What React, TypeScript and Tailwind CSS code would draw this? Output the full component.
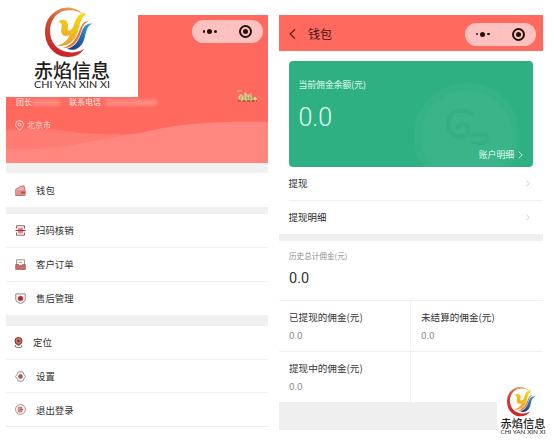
import type { ReactNode } from "react";

type LogoProps = { className?: string };

function Logo({ className }: LogoProps) {
  return (
    <svg viewBox="0 0 80 86" className={className}>
      <defs>
        <linearGradient id="ring" x1="0.7" y1="0" x2="0.4" y2="1">
          <stop offset="0" stopColor="#e8a45a" />
          <stop offset="0.35" stopColor="#d4502f" />
          <stop offset="1" stopColor="#cb1f2a" />
        </linearGradient>
        <linearGradient id="gold" x1="0.6" y1="0" x2="0.3" y2="1">
          <stop offset="0" stopColor="#f8d80e" />
          <stop offset="1" stopColor="#e9a030" />
        </linearGradient>
        <linearGradient id="wave" x1="1" y1="0" x2="0" y2="1">
          <stop offset="0" stopColor="#35b0e6" />
          <stop offset="0.5" stopColor="#2366b4" />
          <stop offset="1" stopColor="#1c2f78" />
        </linearGradient>
      </defs>
      <path
        d="M51 8C44 1 34 0 27 3.5C17 8 13 17 13 26C13 40 23 51 36 51C43 51 49 48 52 43C47 46 41 47 35 46C25 44 18 36 18 25C18 16 23 8 30 5.5C37 3 45 4 51 8Z"
        fill="url(#ring)"
      />
      <path
        d="M26 16C31 11.5 36 14 36 19C36 22 35 25 38 24.5C43 23 42 10 50 7.5C54 6.5 55 8 52 10C47 14 48 24 43 32C39 38 32 41 25 39.5C32 38 36 34 37.5 29C32 32 28 28 29.5 22C30.5 18 29 16 26 16Z"
        fill="url(#gold)"
      />
      <path
        d="M57 15C50 15 49 21 46 28C43 35 38 40 31 42C40 43 45 36 48 29C50 23 51 17 57 15Z"
        fill="#e4792c"
      />
      <path
        d="M60.5 17.5C53 16.5 51 22 48.5 29C46 36 42 41 35 43C43 45.5 49 42 52 34C54 28 54 20 60.5 17.5Z"
        fill="url(#wave)"
      />
      <text
        x="2"
        y="71.5"
        fontSize="19"
        fontWeight="500"
        textLength="76"
        fill="#1d1d1d"
        className="font-['Noto_Sans_CJK_SC',sans-serif]"
      >
        赤焰信息
      </text>
      <text
        x="2"
        y="81.7"
        fontSize="9"
        textLength="76"
        lengthAdjust="spacingAndGlyphs"
        fill="#222"
        className="font-['Lato',sans-serif]"
      >
        CHI YAN XIN XI
      </text>
    </svg>
  );
}

function Capsule() {
  return (
    <div className="flex h-[23px] w-[71px] items-center rounded-full bg-[#ffc1bf]">
      <div className="flex w-[35px] items-center justify-center gap-[2px]">
        <span className="size-[2.5px] rounded-full bg-[#241112]" />
        <span className="size-[5px] rounded-full bg-[#241112]" />
        <span className="size-[2.5px] rounded-full bg-[#241112]" />
      </div>
      <span className="h-3.5 w-px bg-[#fdbcba]" />
      <div className="flex flex-1 items-center justify-center">
        <span className="flex size-[13px] items-center justify-center rounded-full border-2 border-[#241112]">
          <span className="size-[5px] rounded-full bg-[#241112]" />
        </span>
      </div>
    </div>
  );
}

const icons: Record<string, ReactNode> = {
  wallet: (
    <>
      <path d="M.7 4.4L6.2 1.2L9 .9L10 4V10.5H.7Z" fill="#eeb0aa" stroke="#8a5753" strokeWidth=".7" />
      <path d="M1.4 5.2H9.5V10H1.4Z" fill="#e58f89" />
      <path d="M6 6.5H10.5V8.7H6Z" fill="#c94a48" />
    </>
  ),
  scan: (
    <>
      <path d="M1.5 3.5V.8H9.5V3.5M1.5 7.5V10.2H9.5V7.5" fill="none" stroke="#795250" strokeWidth=".9" />
      <path d="M3 2.7H8V8.5H3Z" fill="#e28a85" />
      <path d="M.5 5.5H10.5" stroke="#a52e30" strokeWidth="1.1" />
    </>
  ),
  order: (
    <>
      <path d="M1.5 6V.8H9.5V6" fill="#fff" stroke="#8b8180" strokeWidth=".8" />
      <path d="M3.5 3.3H7.5" stroke="#d78884" />
      <path d="M.7 5.5H3.5L4.5 6.6H6.5L7.5 5.5H10.3V10.4H.7Z" fill="#cc6d69" stroke="#a34e4b" strokeWidth=".7" />
    </>
  ),
  shield: (
    <>
      <path d="M.8 .9H10.2V7Q9.5 9.4 5.5 10.5Q1.5 9.4 .8 7Z" fill="#fff" stroke="#846665" strokeWidth=".8" />
      <path d="M5.5 2.6L8.2 4V6.9L5.5 8.3L2.8 6.9V4Z" fill="#b8393c" />
      <path d="M4.3 5.2L5.3 6.2L7 4.5" fill="none" stroke="#6b2a2b" strokeWidth=".7" />
    </>
  ),
  pin: (
    <>
      <circle cx="5.5" cy="4" r="3.5" fill="#d66f68" stroke="#70342f" strokeWidth="1" />
      <circle cx="5.5" cy="4" r="1.3" fill="#743832" />
      <path d="M4 7.3L5.5 9L7 7.3M2.5 8.2Q1 10.5 5.5 10.5T8.5 8.2" fill="none" stroke="#70544a" strokeWidth=".9" />
    </>
  ),
  gear: (
    <>
      <path d="M3.2 .9H7.8L8.6 3L10.6 5.5L8.6 8L7.8 10.1H3.2L2.4 8L.4 5.5L2.4 3Z" fill="#fff" stroke="#8d7374" strokeWidth=".8" />
      <circle cx="5.5" cy="5.5" r="1.9" fill="#bd6061" stroke="#703b41" strokeWidth=".7" />
    </>
  ),
  exit: (
    <>
      <circle cx="5.5" cy="5.5" r="4.9" fill="#fff" stroke="#9a6a66" strokeWidth=".8" />
      <path d="M3.3 3.2H7V8H3.3Z" fill="#e2938b" stroke="#ae4e49" strokeWidth=".6" />
      <path d="M4.8 5.5H8.3" stroke="#984540" strokeWidth=".8" />
    </>
  ),
};

type MenuRowProps = { icon: string; label: string; tight?: boolean };

function MenuRow({ icon, label, tight }: MenuRowProps) {
  return (
    <div
      className={
        tight
          ? "flex min-h-0 flex-1 items-center gap-[9px] pl-[7px]"
          : "flex min-h-0 flex-1 items-center gap-[10px] pl-[9px]"
      }
    >
      <svg viewBox="0 0 11 11" className="size-[11px] shrink-0">
        {icons[icon]}
      </svg>
      <span className="text-[9.4px] text-[#2f2f2f]">{label}</span>
    </div>
  );
}

function Chevron({ className }: { className?: string }) {
  return (
    <svg viewBox="0 0 5 8" fill="none" stroke="currentColor" strokeWidth=".8" className={className}>
      <path d="M.7 .7L4.2 4L.7 7.3" />
    </svg>
  );
}

function ProfileScreen() {
  return (
    <section className="flex h-[412px] w-[262px] flex-col">
      <div className="relative h-[148px] bg-[#ff695e]">
        <svg viewBox="0 0 262 148" className="absolute inset-0 size-full">
          <path d="M0 115Q45 112 74 118Q103 120 130 119V148H0Z" fill="#ff7c73" />
          <path d="M0 134C55 136 80 126 134 118C175 107 220 106 262 107V148H0Z" fill="#ff877f" />
          <path d="M232 82L235 79L237 81L239 77L242 80L245 78L246 82L250 82L251 85L234 86Z" fill="#e6cd8e" />
          <path d="M235 85V81M238 85V79M241 85V80M244 85V79M247 85V82" stroke="#a8894c" strokeWidth=".8" />
          <path d="M232 86H251" stroke="#8b5f38" strokeWidth="1.4" strokeDasharray="3 1.5" />
          <path d="M231 76H236" stroke="#ffc7b9" />
          <path d="M240 83H248" stroke="#6f9d50" strokeWidth=".7" />
        </svg>
        <div className="relative flex justify-end pt-[5px] pr-[5px]">
          <Capsule />
        </div>
        <div className="relative mt-[53px] flex h-3 items-center pl-[10px] text-[8px] text-[#ffe5e1]">
          <span className="w-4">团长</span>
          <span className="h-[5px] w-7 bg-[#ff958d] blur-[2px]" />
          <span className="ml-[9px] w-8">联系电话</span>
          <span className="ml-1 h-[5px] w-[52px] bg-[#ff958d] blur-[2px]" />
        </div>
        <div className="relative mt-[11px] flex h-3 items-center gap-[3px] pl-[9px] text-[8px] text-[#ffdfdb]">
          <svg viewBox="0 0 9 11" fill="none" stroke="currentColor" className="h-[11px] w-[9px]">
            <path d="M4.5 10.2L1.6 7Q.6 6 .6 4.5A3.9 3.9 0 0 1 8.4 4.5Q8.4 6 7.4 7Z" strokeWidth=".9" />
            <circle cx="4.5" cy="4.5" r="1.4" strokeWidth=".9" />
          </svg>
          北京市
        </div>
      </div>
      <div className="h-[10px] bg-[#f2f1f1]" />
      <div className="flex h-[34px]">
        <MenuRow icon="wallet" label="钱包" />
      </div>
      <div className="h-[7px] bg-[#f0f0f0]" />
      <div className="flex h-[101px] flex-col divide-y divide-[#f2f2f2]">
        <MenuRow icon="scan" label="扫码核销" />
        <MenuRow icon="order" label="客户订单" />
        <MenuRow icon="shield" label="售后管理" />
      </div>
      <div className="h-[11px] bg-[#f0f0f0]" />
      <div className="flex h-[101px] flex-col divide-y divide-[#f2f2f2] border-b border-[#ececec]">
        <MenuRow icon="pin" label="定位" tight />
        <MenuRow icon="gear" label="设置" />
        <MenuRow icon="exit" label="退出登录" />
      </div>
    </section>
  );
}

function Amount({ label }: { label: string }) {
  return (
    <div className="flex flex-col pt-[8px] pl-[10px]">
      <span className="h-4 text-[9.6px] leading-4 text-[#333]">{label}</span>
      <span className="mt-[3px] h-4 font-['Roboto',sans-serif] text-[9.8px] leading-4 text-[#8c8c8c]">
        0.0
      </span>
    </div>
  );
}

function WalletScreen() {
  return (
    <section className="flex h-[415px] w-[264px] flex-col">
      <header className="flex h-[36px] items-center bg-[#ff695e] pt-[2px] pr-[7px] pl-[10px] text-[#421719]">
        <Chevron className="h-[12px] w-[7px] rotate-180" />
        <h1 className="mr-auto ml-[12px] text-[12px]">钱包</h1>
        <Capsule />
      </header>
      <div className="px-[10px] pt-[10px]">
        <div className="relative h-[106px] overflow-hidden rounded-[4px] bg-[#2fb083] pl-[9.5px] text-[#e0fff2]">
          <svg viewBox="0 0 244 106" className="absolute inset-0 size-full">
            <circle cx="178" cy="75" r="53" fill="#35b287" />
            <circle cx="178" cy="75" r="46" fill="#3ab489" />
            <g fill="none" stroke="#33af84" strokeWidth="4">
              <path d="M184 53Q166 44 160 58Q156 74 172 76Q184 72 177 64Q170 60 168 68" />
              <path d="M180 74H198V80Q190 86 183 81" strokeWidth="3" />
            </g>
          </svg>
          <p className="relative pt-[17px] text-[8.8px] leading-[14px]">当前佣金余额(元)</p>
          <p className="relative mt-[10px] font-['Roboto',sans-serif] text-[25px] leading-8 font-light">
            0.0
          </p>
          <p className="relative mt-[14px] mr-[10px] flex items-center justify-end gap-1 text-[8.8px] leading-[14px]">
            账户明细
            <Chevron className="h-[8px] w-[5px]" />
          </p>
        </div>
      </div>
      <div className="h-[67px] pl-[9.5px] text-[9.5px] text-[#2d2d2d]">
        <div className="flex h-[34px] items-center justify-between border-b border-[#f0f0f0] pr-[13px]">
          提现
          <Chevron className="h-[7px] w-[4px] text-[#b5b5b5]" />
        </div>
        <div className="flex h-[33px] items-center justify-between pr-[13px]">
          提现明细
          <Chevron className="h-[7px] w-[4px] text-[#b5b5b5]" />
        </div>
      </div>
      <div className="h-[7px] bg-[#efefef]" />
      <div className="h-[60px] border-b border-[#f0f0f0] pt-[8px] pl-[10px]">
        <p className="text-[7.6px] leading-[14px] text-[#8d8d8d]">历史总计佣金(元)</p>
        <p className="mt-[6px] font-['Roboto',sans-serif] text-[14.5px] leading-5 text-[#333]">0.0</p>
      </div>
      <div className="grid h-[51px] grid-cols-2 divide-x divide-[#f2f2f2] border-b border-[#f0f0f0]">
        <Amount label="已提现的佣金(元)" />
        <Amount label="未结算的佣金(元)" />
      </div>
      <div className="grid h-[50px] grid-cols-2 divide-x divide-[#f2f2f2]">
        <Amount label="提现中的佣金(元)" />
        <div />
      </div>
      <div className="h-[28px] bg-[#efefef]" />
    </section>
  );
}

export default function App() {
  return (
    <main className="relative flex h-[444px] w-[554px] gap-[11px] overflow-hidden bg-white pt-[15px] pl-[6px] font-['Noto_Sans_CJK_SC',sans-serif]">
      <ProfileScreen />
      <WalletScreen />
      <div className="absolute top-0 left-0 flex h-[97px] w-[138px] bg-white pt-[6px] pl-[32px]">
        <Logo className="h-[86px] w-[80px]" />
      </div>
      <div className="absolute top-[385px] left-[497px] flex h-[52px] w-[51px] items-center justify-center bg-white">
        <Logo className="h-[51px] w-[48px]" />
      </div>
    </main>
  );
}
